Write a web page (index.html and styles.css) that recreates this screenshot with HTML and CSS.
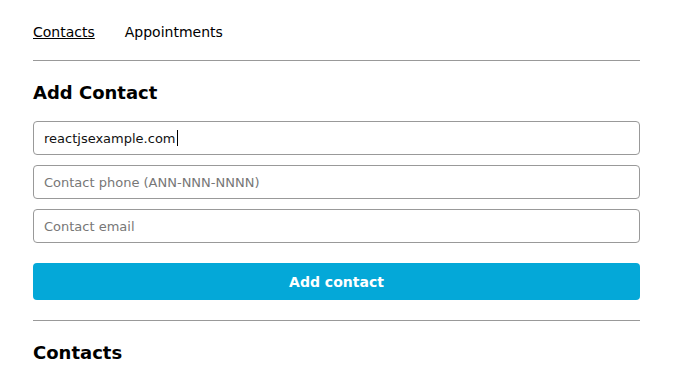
FILE: index.html
```html
<!DOCTYPE html>
<html>
<head>
<meta charset="utf-8">
<link rel="stylesheet" href="styles.css">
</head>
<body>
<div class="app">
  <nav class="nav">
    <a class="nav-link active" href="#">Contacts</a>
    <a class="nav-link" href="#">Appointments</a>
  </nav>
  <hr class="rule">
  <section class="section">
    <h2 class="title">Add Contact</h2>
    <form class="form">
      <div class="field"><span class="value">reactjsexample.com</span><span class="caret"></span></div>
      <div class="field placeholder">Contact phone (ANN-NNN-NNNN)</div>
      <div class="field placeholder">Contact email</div>
      <button class="btn" type="button">Add contact</button>
    </form>
  </section>
  <hr class="rule rule-bottom">
  <section class="section">
    <h2 class="title">Contacts</h2>
  </section>
</div>
</body>
</html>
```
FILE: styles.css
```css
html, body {
  margin: 0;
  padding: 0;
  background: #fff;
}
body {
  font-family: "DejaVu Sans", Verdana, sans-serif;
  color: #000;
  overflow: hidden;
}
.app {
  width: 607px;
  padding: 23px 33px 0;
}
.nav {
  display: flex;
  gap: 30px;
  font-size: 14px;
  line-height: 18px;
}
.nav-link {
  color: #000;
  text-decoration: none;
}
.nav-link.active {
  text-decoration: underline;
}
.rule {
  border: 0;
  border-top: 1px solid #999;
  margin: 19px 0 0;
  height: 0;
}
.title {
  font-size: 18px;
  font-weight: bold;
  line-height: 22px;
  margin: 21px 0 0;
}
.form {
  display: flex;
  flex-direction: column;
  gap: 10px;
  margin-top: 17px;
}
.field {
  box-sizing: border-box;
  height: 34px;
  border: 1px solid #999;
  border-radius: 4px;
  padding: 0 10px;
  display: flex;
  align-items: center;
  font-size: 13px;
  color: #111;
}
.field.placeholder {
  color: #777;
}
.caret {
  display: inline-block;
  width: 1px;
  height: 16px;
  background: #000;
  margin-left: 1px;
}
.btn {
  margin-top: 10px;
  height: 37px;
  border: 0;
  border-radius: 4px;
  background: #04a8d8;
  color: #fff;
  font-family: Tahoma, "DejaVu Sans", sans-serif;
  font-weight: bold;
  font-size: 14px;
}
.rule-bottom {
  margin-top: 20px;
}
.section + .rule-bottom + .section .title {
  margin-top: 21px;
}
```
